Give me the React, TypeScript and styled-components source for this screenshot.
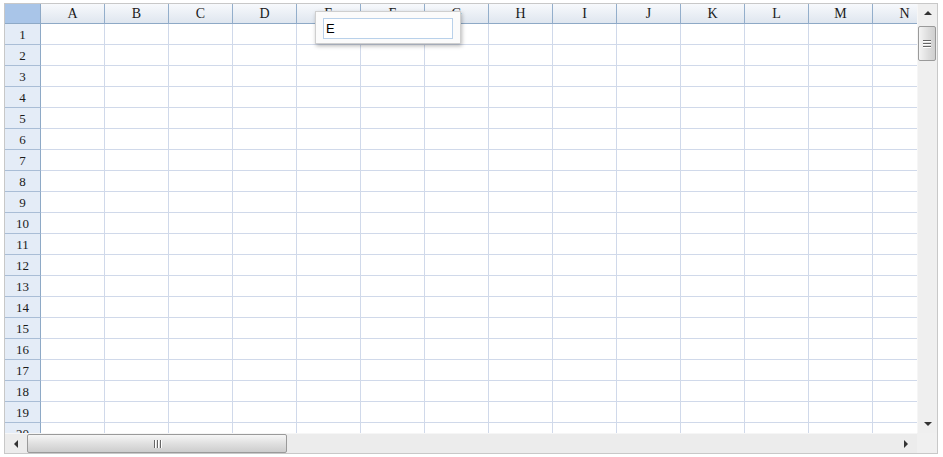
import styled, { createGlobalStyle } from "styled-components";

const columns = ["A", "B", "C", "D", "E", "F", "G", "H", "I", "J", "K", "L", "M", "N"];
const rows = Array.from({ length: 20 }, (_, i) => i + 1);

export default function App() {
  return (
    <>
      <GlobalStyle />
      <Sheet>
        <TopRow>
          <GridArea>
            <Grid>
              <Corner />
              {columns.map((c) => (
                <ColHeader key={c}>{c}</ColHeader>
              ))}
              {rows.map((r) => (
                <RowFragment key={r} row={r} />
              ))}
            </Grid>
            <Popup>
              <PopupInput defaultValue="E" />
            </Popup>
          </GridArea>
          <VScroll>
            <Arrow $dir="up" />
            <VTrack>
              <VThumb>
                <GripV>
                  <span />
                  <span />
                  <span />
                </GripV>
              </VThumb>
            </VTrack>
            <Arrow $dir="down" />
          </VScroll>
        </TopRow>
        <BottomRow>
          <HScroll>
            <Arrow $dir="left" />
            <HTrack>
              <HThumb>
                <GripH>
                  <span />
                  <span />
                  <span />
                </GripH>
              </HThumb>
            </HTrack>
            <Arrow $dir="right" />
          </HScroll>
          <ScrollCorner />
        </BottomRow>
      </Sheet>
    </>
  );
}

function RowFragment({ row }: { row: number }) {
  return (
    <>
      <RowHeader>{row}</RowHeader>
      {columns.map((c) => (
        <Cell key={c} />
      ))}
    </>
  );
}

const GlobalStyle = createGlobalStyle`
  body {
    margin: 0;
    background: #fff;
    font-family: "Liberation Serif", serif;
  }
`;

const Sheet = styled.div`
  margin: 3px 0 0 4px;
  width: 934px;
  height: 451px;
  box-sizing: border-box;
  border: 1px solid #c8c8c8;
  display: flex;
  flex-direction: column;
`;

const TopRow = styled.div`
  display: flex;
  height: 429px;
`;

const GridArea = styled.div`
  position: relative;
  width: 912px;
  height: 429px;
  overflow: hidden;
`;

const Grid = styled.div`
  display: grid;
  grid-template-columns: 36px repeat(14, 64px);
  grid-template-rows: 20px repeat(20, 21px);
  width: max-content;
`;

const Corner = styled.div`
  background: #a9c5e8;
  border-right: 1px solid #8ea9c6;
  border-bottom: 1px solid #8ea9c6;
  box-sizing: border-box;
`;

const ColHeader = styled.div`
  box-sizing: border-box;
  background: linear-gradient(#f7f9fc, #dfe6ef);
  border-right: 1px solid #93aecb;
  border-bottom: 1px solid #8ea9c6;
  display: flex;
  align-items: center;
  justify-content: center;
  font-size: 14px;
  color: #1a1a1a;
  padding-top: 1px;
`;

const RowHeader = styled.div`
  box-sizing: border-box;
  background: #e4ecf7;
  border-right: 1px solid #8ea9c6;
  border-bottom: 1px solid #a9bdd6;
  display: flex;
  align-items: center;
  justify-content: center;
  font-size: 13px;
  color: #1a1a1a;
  padding-top: 1px;
`;

const Cell = styled.div`
  box-sizing: border-box;
  background: #fff;
  border-right: 1px solid #d0d9ea;
  border-bottom: 1px solid #d0d9ea;
`;

const Popup = styled.div`
  position: absolute;
  left: 310px;
  top: 7px;
  width: 146px;
  height: 33px;
  box-sizing: border-box;
  background: #fbfbfb;
  border: 1px solid #cfcfcf;
  box-shadow: 1px 2px 4px rgba(0, 0, 0, 0.28);
  padding: 6px 7px;
`;

const PopupInput = styled.input`
  display: block;
  width: 130px;
  height: 21px;
  box-sizing: border-box;
  border: 1px solid #b9d1ea;
  background: #fff;
  font-family: "Liberation Sans", Arial, sans-serif;
  font-size: 13px;
  color: #000;
  padding: 0 0 0 2px;
  outline: none;
`;

const VScroll = styled.div`
  width: 20px;
  display: flex;
  flex-direction: column;
  align-items: stretch;
  background: #efefef;
  border-left: 1px solid #f6f6f6;
  box-sizing: border-box;
`;

const VTrack = styled.div`
  flex: 1;
  padding-top: 4px;
`;

const VThumb = styled.div`
  margin-left: 0;
  width: 18px;
  height: 35px;
  box-sizing: border-box;
  border: 1px solid #9a9a9a;
  border-radius: 2px;
  background: linear-gradient(90deg, #f4f4f4, #dcdcdc 60%, #cfcfcf);
  display: flex;
  align-items: center;
  justify-content: center;
`;

const GripV = styled.div`
  display: flex;
  flex-direction: column;
  gap: 2px;
  span {
    display: block;
    width: 8px;
    height: 1px;
    background: #666;
    box-shadow: 0 1px 0 #fff;
  }
`;

const BottomRow = styled.div`
  display: flex;
  height: 20px;
`;

const HScroll = styled.div`
  width: 912px;
  display: flex;
  align-items: center;
  background: #ececec;
  border-top: 1px solid #f6f6f6;
  box-sizing: border-box;
`;

const HTrack = styled.div`
  flex: 1;
  height: 100%;
  display: flex;
  align-items: center;
`;

const HThumb = styled.div`
  width: 260px;
  height: 19px;
  box-sizing: border-box;
  border: 1px solid #9a9a9a;
  border-radius: 2px;
  background: linear-gradient(#f6f6f6, #dedede 55%, #cdcdcd);
  display: flex;
  align-items: center;
  justify-content: center;
`;

const GripH = styled.div`
  display: flex;
  gap: 2px;
  span {
    display: block;
    width: 1px;
    height: 8px;
    background: #666;
    box-shadow: 1px 0 0 #fff;
  }
`;

const ScrollCorner = styled.div`
  width: 20px;
  background: #f0f0f0;
`;

const arrowShape = {
  up: "border-left: 4px solid transparent; border-right: 4px solid transparent; border-bottom: 4px solid #333;",
  down: "border-left: 4px solid transparent; border-right: 4px solid transparent; border-top: 4px solid #333;",
  left: "border-top: 4px solid transparent; border-bottom: 4px solid transparent; border-right: 4px solid #333;",
  right: "border-top: 4px solid transparent; border-bottom: 4px solid transparent; border-left: 4px solid #333;",
};

const Arrow = styled.div<{ $dir: "up" | "down" | "left" | "right" }>`
  flex: none;
  display: flex;
  align-items: center;
  justify-content: center;
  width: ${(p) => (p.$dir === "up" || p.$dir === "down" ? "19px" : "22px")};
  height: ${(p) => (p.$dir === "up" || p.$dir === "down" ? "18px" : "19px")};
  &::before {
    content: "";
    width: 0;
    height: 0;
    ${(p) => arrowShape[p.$dir]}
  }
`;
